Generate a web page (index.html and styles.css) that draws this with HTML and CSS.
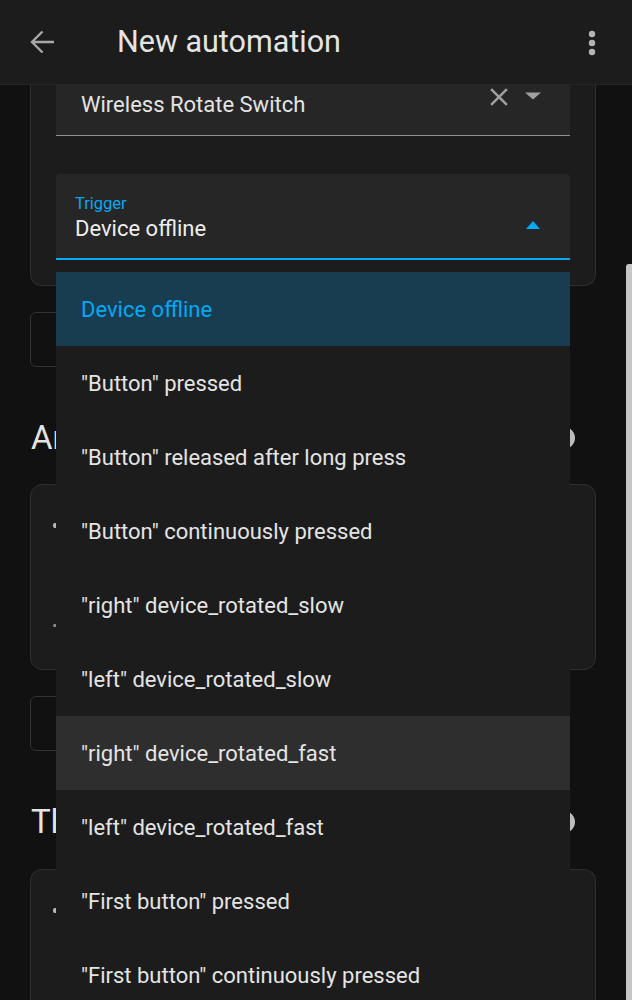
FILE: index.html
```html
<!DOCTYPE html>
<html lang="en">
<head>
<meta charset="utf-8">
<title>New automation</title>
<link rel="stylesheet" href="styles.css">
</head>
<body>
<header class="topbar">
  <span class="icon-btn back">
    <svg width="36" height="36" viewBox="0 0 36 36"><path d="M30 18H8M18.5 7.5L8 18l10.5 10.5" fill="none" stroke="#a8a8a8" stroke-width="2.4"/></svg>
  </span>
  <h1 class="title">New automation</h1>
  <span class="icon-btn more">
    <svg width="24" height="36" viewBox="0 0 24 36"><circle cx="12" cy="10" r="3.2" fill="#b4b4b4"/><circle cx="12" cy="19" r="3.2" fill="#b4b4b4"/><circle cx="12" cy="28" r="3.2" fill="#b4b4b4"/></svg>
  </span>
</header>

<main class="content">
  <section class="card card-first">
    <div class="field field-device">
      <span class="field-value">Wireless Rotate Switch</span>
      <span class="field-icons">
        <svg class="ic-close" width="30" height="30" viewBox="0 0 24 24"><path d="M19,6.41L17.59,5L12,10.59L6.41,5L5,6.41L10.59,12L5,17.59L6.41,19L12,13.41L17.59,19L19,17.59L13.41,12L19,6.41Z" fill="#a0a0a0"/></svg>
        <svg class="ic-down" width="24" height="24" viewBox="0 0 24 24"><path d="M4 8.5h16l-8 7z" fill="#a0a0a0"/></svg>
      </span>
    </div>
    <div class="field field-select">
      <div class="field-text">
        <span class="field-label">Trigger</span>
        <span class="field-value">Device offline</span>
      </div>
      <svg class="ic-up" width="24" height="24" viewBox="0 0 24 24"><path d="M5 16h14l-7-8z" fill="#03a9f4"/></svg>
    </div>
  </section>

  <div class="outline-btn"></div>

  <div class="section-head">
    <h2 class="section-title">And if</h2>
    <span class="help"></span>
  </div>

  <section class="card card-mid">
    <span class="peek"></span>
    <span class="peek peek-low"></span>
  </section>

  <div class="outline-btn"></div>

  <div class="section-head">
    <h2 class="section-title">Then do</h2>
    <span class="help"></span>
  </div>

  <section class="card card-last">
    <span class="peek"></span>
  </section>
</main>

<ul class="menu">
  <li class="menu-item selected">Device offline</li>
  <li class="menu-item">"Button" pressed</li>
  <li class="menu-item">"Button" released after long press</li>
  <li class="menu-item">"Button" continuously pressed</li>
  <li class="menu-item">"right" device_rotated_slow</li>
  <li class="menu-item">"left" device_rotated_slow</li>
  <li class="menu-item hover">"right" device_rotated_fast</li>
  <li class="menu-item">"left" device_rotated_fast</li>
  <li class="menu-item">"First button" pressed</li>
  <li class="menu-item">"First button" continuously pressed</li>
</ul>

<div class="scrollbar"></div>
</body>
</html>
```

FILE: styles.css
```css
* { box-sizing: border-box; }

html, body {
  margin: 0;
  padding: 0;
}

body {
  width: 632px;
  height: 1000px;
  overflow: hidden;
  position: relative;
  background: #111111;
  color: #e1e1e1;
  font-family: Roboto, "Noto Sans", "Liberation Sans", sans-serif;
}

/* ---------- top bar ---------- */
.topbar {
  height: 85px;
  display: flex;
  align-items: center;
  padding: 0 28px 1px 24px;
  background: #1c1c1c;
  border-bottom: 1px solid #262626;
}

.icon-btn {
  display: flex;
  align-items: center;
  justify-content: center;
}

.title {
  margin: 0 0 0 57px;
  font-size: 30.5px;
  font-weight: 400;
  color: #e4e4e4;
  line-height: 36px;
  flex: 1;
}

/* ---------- content ---------- */
.content {
  padding: 0 36px 0 30px;
  display: flex;
  flex-direction: column;
}

.card {
  background: #1c1c1c;
  border: 1px solid #2e2e2e;
  border-radius: 12px;
}

.card-first {
  border-top: none;
  border-radius: 0 0 12px 12px;
  padding: 0 25px 25px;
  display: flex;
  flex-direction: column;
  gap: 38px;
}

.field {
  background: #262626;
  display: flex;
}

.field-device {
  height: 51px;
  border-bottom: 1px solid #8f8f8f;
  padding: 0 25px 0 25px;
  justify-content: space-between;
  align-items: flex-start;
}

.field-device .field-value {
  margin-top: 7px;
  font-size: 22px;
  line-height: 26px;
  color: #e4e4e4;
}

.field-icons {
  display: flex;
  align-items: flex-start;
  gap: 7px;
}

.ic-close { margin-top: -3px; }
.ic-down { margin-top: -1px; }

.field-select {
  height: 86px;
  border-radius: 4px 4px 0 0;
  border-bottom: 2px solid #03a9f4;
  padding: 20px 25px 0 19px;
  justify-content: space-between;
  align-items: flex-start;
}

.field-text {
  display: flex;
  flex-direction: column;
}

.field-label {
  font-size: 16.5px;
  line-height: 20px;
  color: #03a9f4;
}

.field-select .field-value {
  margin-top: 2px;
  font-size: 22px;
  line-height: 26px;
  color: #eeeeee;
}

.ic-up { margin-top: 19px; }

.outline-btn {
  margin-top: 26px;
  width: 220px;
  height: 55px;
  border: 1px solid #333333;
  border-radius: 6px;
}

.section-head {
  margin-top: 51px;
  height: 40px;
  display: flex;
  align-items: center;
  justify-content: space-between;
}

.section-title {
  margin: 0 0 0 1px;
  font-size: 33px;
  font-weight: 400;
  line-height: 40px;
  color: #e4e4e4;
}

.help {
  width: 22px;
  height: 22px;
  border-radius: 50%;
  background: #bdbdbd;
  margin-right: 21px;
}

.card-mid {
  margin-top: 26px;
  height: 186px;
  padding: 38px 0 0 22px;
  display: flex;
  flex-direction: column;
  align-items: flex-start;
}

.card-last {
  margin-top: 27px;
  height: 200px;
  border-bottom: none;
  padding: 38px 0 0 22px;
  display: flex;
  flex-direction: column;
  align-items: flex-start;
}

.peek {
  width: 4px;
  height: 5px;
  background: #b8b8b8;
  border-radius: 2px 0 0 2px;
}

.peek-low {
  margin-top: 96px;
  width: 3px;
  height: 3px;
  background: #8a8a8a;
}

/* ---------- dropdown menu (overlay) ---------- */
.menu {
  position: absolute;
  left: 56px;
  top: 272px;
  width: 514px;
  bottom: 0;
  margin: 0;
  padding: 0;
  list-style: none;
  background: #1c1c1c;
  overflow: hidden;
}

.menu-item {
  height: 74px;
  display: flex;
  align-items: center;
  padding-left: 25px;
  font-size: 22px;
  color: #e4e4e4;
  white-space: nowrap;
}

.menu-item.selected {
  background: #183c50;
  color: #03a9f4;
}

.menu-item.hover {
  background: #2e2e2e;
}

/* ---------- scrollbar (overlay) ---------- */
.scrollbar {
  position: absolute;
  right: 0;
  top: 264px;
  bottom: 0;
  width: 6px;
  background: #c6c6c6;
  border-top-left-radius: 3px;
}
```
